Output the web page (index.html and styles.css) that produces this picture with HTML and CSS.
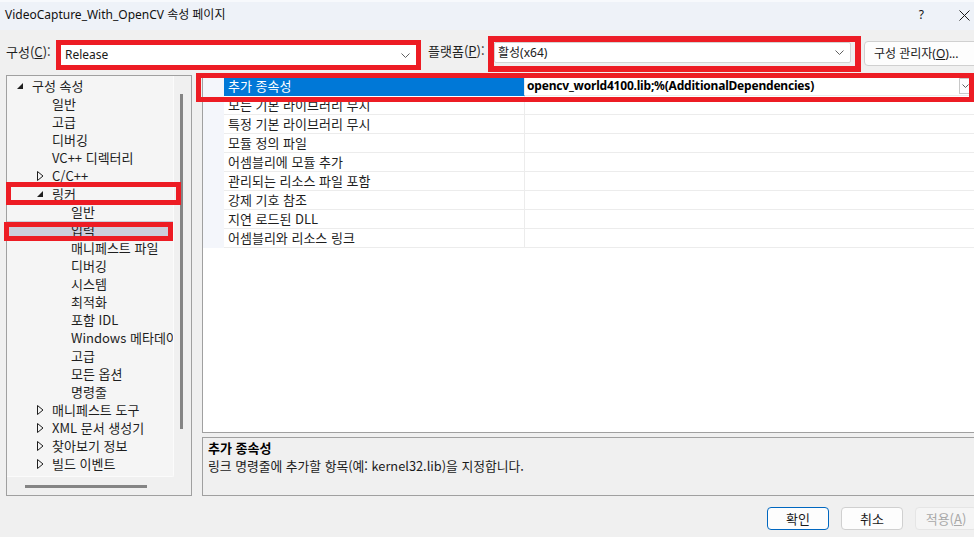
FILE: index.html
```html
<!DOCTYPE html>
<html lang="ko">
<head>
<meta charset="utf-8">
<title>VideoCapture_With_OpenCV 속성 페이지</title>
<link rel="stylesheet" href="styles.css">
</head>
<body>
<div class="dialog">
  <header class="titlebar">
    <span class="title">VideoCapture_With_OpenCV 속성 페이지</span>
    <span class="help">?</span>
    <svg class="close" width="11" height="11" viewBox="0 0 11 11"><path d="M0.5 0.5L10.5 10.5M10.5 0.5L0.5 10.5" stroke="#1a1a1a" stroke-width="1" fill="none"/></svg>
  </header>

  <div class="config-row">
    <span class="cfg-label ko">구성(<u>C</u>):</span>
    <div class="hl hl-config">
      <div class="combo">
        <span class="combo-text">Release</span>
        <svg class="chev" width="9" height="5" viewBox="0 0 9 5"><polyline points="0.5,0.5 4.5,4.5 8.5,0.5" fill="none" stroke="#606060" stroke-width="1"/></svg>
      </div>
    </div>
    <span class="plat-label ko">플랫폼(<u>P</u>):</span>
    <div class="hl hl-platform">
      <div class="combo combo-bordered">
        <span class="combo-text">활성(x64)</span>
        <svg class="chev" width="9" height="5" viewBox="0 0 9 5"><polyline points="0.5,0.5 4.5,4.5 8.5,0.5" fill="none" stroke="#606060" stroke-width="1"/></svg>
      </div>
    </div>
    <button class="btn btn-manager ko">구성 관리자(<u>O</u>)...</button>
  </div>

  <div class="main">
    <div class="tree-panel">
      <div class="tree ko">
        <div class="node l0"><span class="exp"><svg width="6" height="6" viewBox="0 0 6 6"><polygon points="6,0 6,6 0,6" fill="#1e1e1e"/></svg></span>구성 속성</div>
        <div class="node l1"><span class="exp"></span>일반</div>
        <div class="node l1"><span class="exp"></span>고급</div>
        <div class="node l1"><span class="exp"></span>디버깅</div>
        <div class="node l1"><span class="exp"></span>VC++ 디렉터리</div>
        <div class="node l1"><span class="exp"><svg width="7" height="10" viewBox="0 0 7 10"><polygon points="0.5,0.5 6,5 0.5,9.5" fill="none" stroke="#1e1e1e" stroke-width="1"/></svg></span>C/C++</div>
        <div class="node l1"><span class="exp"><svg width="6" height="6" viewBox="0 0 6 6"><polygon points="6,0 6,6 0,6" fill="#1e1e1e"/></svg></span>링커</div>
        <div class="node l2">일반</div>
        <div class="node l2 selected">입력</div>
        <div class="node l2">매니페스트 파일</div>
        <div class="node l2">디버깅</div>
        <div class="node l2">시스템</div>
        <div class="node l2">최적화</div>
        <div class="node l2">포함 IDL</div>
        <div class="node l2">Windows 메타데이터</div>
        <div class="node l2">고급</div>
        <div class="node l2">모든 옵션</div>
        <div class="node l2">명령줄</div>
        <div class="node l1"><span class="exp"><svg width="7" height="10" viewBox="0 0 7 10"><polygon points="0.5,0.5 6,5 0.5,9.5" fill="none" stroke="#1e1e1e" stroke-width="1"/></svg></span>매니페스트 도구</div>
        <div class="node l1"><span class="exp"><svg width="7" height="10" viewBox="0 0 7 10"><polygon points="0.5,0.5 6,5 0.5,9.5" fill="none" stroke="#1e1e1e" stroke-width="1"/></svg></span>XML 문서 생성기</div>
        <div class="node l1"><span class="exp"><svg width="7" height="10" viewBox="0 0 7 10"><polygon points="0.5,0.5 6,5 0.5,9.5" fill="none" stroke="#1e1e1e" stroke-width="1"/></svg></span>찾아보기 정보</div>
        <div class="node l1"><span class="exp"><svg width="7" height="10" viewBox="0 0 7 10"><polygon points="0.5,0.5 6,5 0.5,9.5" fill="none" stroke="#1e1e1e" stroke-width="1"/></svg></span>빌드 이벤트</div>
      </div>
      <div class="vscroll"><div class="vthumb"></div></div>
      <div class="hscroll"><div class="hthumb"></div></div>
      <div class="corner"></div>
    </div>

    <div class="right">
      <div class="grid">
        <div class="row active">
          <div class="gutter"></div>
          <div class="name ko">추가 종속성</div>
          <div class="value">
            <span class="value-text">opencv_world4100.lib;%(AdditionalDependencies)</span>
            <span class="drop"><svg width="7" height="4" viewBox="0 0 7 4"><polyline points="0.5,0.5 3.5,3.5 6.5,0.5" fill="none" stroke="#606060" stroke-width="1"/></svg></span>
          </div>
        </div>
        <div class="row"><div class="gutter"></div><div class="name ko">모든 기본 라이브러리 무시</div><div class="value"></div></div>
        <div class="row"><div class="gutter"></div><div class="name ko">특정 기본 라이브러리 무시</div><div class="value"></div></div>
        <div class="row"><div class="gutter"></div><div class="name ko">모듈 정의 파일</div><div class="value"></div></div>
        <div class="row"><div class="gutter"></div><div class="name ko">어셈블리에 모듈 추가</div><div class="value"></div></div>
        <div class="row"><div class="gutter"></div><div class="name ko">관리되는 리소스 파일 포함</div><div class="value"></div></div>
        <div class="row"><div class="gutter"></div><div class="name ko">강제 기호 참조</div><div class="value"></div></div>
        <div class="row"><div class="gutter"></div><div class="name ko">지연 로드된 DLL</div><div class="value"></div></div>
        <div class="row"><div class="gutter"></div><div class="name ko">어셈블리와 리소스 링크</div><div class="value"></div></div>
      </div>
      <div class="desc ko">
        <div class="desc-title">추가 종속성</div>
        <div class="desc-text">링크 명령줄에 추가할 항목(예: kernel32.lib)을 지정합니다.</div>
      </div>
    </div>
  </div>

  <footer class="buttons ko">
    <button class="btn btn-ok">확인</button>
    <button class="btn">취소</button>
    <button class="btn btn-disabled">적용(<u>A</u>)</button>
  </footer>

  <div class="mark mark-linker"></div>
  <div class="mark mark-input"></div>
  <div class="mark mark-row"></div>
</div>
</body>
</html>
```

FILE: styles.css
```css
html, body {
  margin: 0;
  padding: 0;
}
body {
  width: 974px;
  height: 537px;
  overflow: hidden;
  background: #f0f0f0;
  font-family: "Noto Sans", "Noto Sans CJK KR", sans-serif;
  font-size: 12px;
  color: #1e1e1e;
}
.ko {
  font-family: "Noto Sans CJK KR", "Noto Sans", sans-serif;
  font-size: 13px;
}
.dialog {
  position: relative;
  width: 974px;
  height: 537px;
}
u { text-decoration: underline; text-underline-offset: 1px; }

/* title bar */
.titlebar {
  height: 30px;
  display: flex;
  align-items: center;
  background: #eef2f8;
  border-top: 2px solid #f7f9fc;
  box-sizing: border-box;
  padding-left: 5px;
}
.title {
  font-size: 12px;
  line-height: 16px;
  color: #111;
  margin-top: -2px;
}
.help {
  margin-left: auto;
  font-size: 12px;
  line-height: 16px;
  color: #111;
  margin-top: -2px;
}
.close {
  margin-left: 35px;
  margin-right: 4px;
  margin-top: -2px;
}

/* config row */
.config-row {
  height: 45px;
  display: flex;
  align-items: flex-start;
  padding-left: 6px;
  box-sizing: border-box;
}
.cfg-label {
  flex: none;
  width: 50px;
  line-height: 16px;
  margin-top: 14px;
}
.plat-label {
  flex: none;
  width: 60px;
  margin-left: 7px;
  line-height: 16px;
  margin-top: 13px;
}
.hl {
  flex: none;
  border: 5px solid #ed1c24;
  box-sizing: border-box;
  display: flex;
}
.hl-config {
  width: 365px;
  height: 30px;
  margin-top: 10px;
}
.hl-platform {
  width: 373px;
  height: 36px;
  border-width: 6px;
  padding: 0 4px 3px 0;
  margin-top: 6px;
}
.combo {
  flex: 1;
  display: flex;
  align-items: center;
  background: #fff;
  padding: 0 6px 0 4px;
  box-sizing: border-box;
}
.combo-bordered {
  border: 1px solid #d4d4d4;
  border-radius: 2px;
  padding-left: 3px;
}
.combo-text {
  flex: 1;
  line-height: 16px;
  color: #1a1a1a;
}
.chev { display: block; }

.btn {
  font-family: inherit;
  font-size: inherit;
  line-height: 16px;
  color: #1a1a1a;
  background: #fdfdfd;
  border: 1px solid #d0d0d0;
  border-radius: 4px;
  padding: 0;
  box-sizing: border-box;
}
.btn-manager {
  flex: none;
  margin-left: 3px;
  width: 118px;
  height: 25px;
  text-align: left;
  padding-left: 9px;
  margin-top: 11px;
}

/* main */
.main {
  display: flex;
  height: 421px;
  padding-left: 6px;
}
.tree-panel {
  flex: none;
  width: 186px;
  border: 1px solid #a0a0a0;
  box-sizing: border-box;
  display: grid;
  grid-template-columns: 167px 1fr;
  grid-template-rows: 401px 1fr;
  background: #f0f0f0;
}
.tree {
  background: #f5f5f5;
  overflow: hidden;
  border-right: 1px solid #fbfbfb;
  border-bottom: 1px solid #fbfbfb;
  border-bottom-right-radius: 2px;
  padding-top: 1px;
  box-sizing: border-box;
}
.node {
  height: 18px;
  line-height: 18px;
  white-space: nowrap;
  display: flex;
  align-items: center;
  color: #1e1e1e;
}
.node .exp {
  width: 15px;
  flex: none;
  display: flex;
  align-items: center;
}
.node .exp svg { display: block; }
.l0 { padding-left: 10px; }
.l1 { padding-left: 30px; }
.l2 { padding-left: 64px; }
.node.selected { background: #cccedb; }

.vthumb {
  margin: 18px 0 0 6px;
  width: 3px;
  height: 335px;
  background: #858585;
}
.hthumb {
  margin: 8px 0 0 18px;
  width: 122px;
  height: 3px;
  background: #858585;
}

.right {
  margin-left: 10px;
  flex: 1;
  display: flex;
  flex-direction: column;
  gap: 4px;
}
.grid {
  height: 358px;
  background: #fff;
  border: 1px solid #a0a0a0;
  border-right: none;
  box-sizing: border-box;
  padding-top: 1px;
}
.row {
  display: grid;
  grid-template-columns: 21px 301px 1fr;
  height: 19px;
}
.gutter {
  background: #f4f6fb;
}
.name {
  padding-left: 4px;
  line-height: 18px;
  border-bottom: 1px solid #ececec;
  border-right: 1px solid #ececec;
  white-space: nowrap;
  color: #1e1e1e;
}
.value {
  border-bottom: 1px solid #ececec;
  display: flex;
  align-items: center;
}
.row.active .name {
  background: #0078d7;
  color: #fff;
  border-bottom-color: #0078d7;
}
.value-text {
  flex: 1;
  padding-left: 2px;
  font-weight: bold;
  line-height: 18px;
  letter-spacing: -0.2px;
  color: #000;
  white-space: nowrap;
}
.drop {
  width: 12px;
  height: 16px;
  margin-right: 3px;
  border: 1px solid #c8c8c8;
  background: #fdfdfd;
  display: flex;
  align-items: center;
  justify-content: center;
  box-sizing: border-box;
}
.drop svg { display: block; }

.desc {
  height: 59px;
  border: 1px solid #a0a0a0;
  border-right: none;
  box-sizing: border-box;
  background: #f0f0f0;
  padding: 1px 5px 0;
}
.desc-title {
  font-weight: bold;
  line-height: 18px;
  color: #000;
}
.desc-text {
  font-size: 12.8px;
  line-height: 18px;
  color: #1a1a1a;
}

/* footer */
.buttons {
  display: flex;
  justify-content: flex-end;
  gap: 12px;
  padding-top: 11px;
  margin-right: -3px;
}
.buttons .btn {
  width: 62px;
  height: 23px;
  text-align: center;
}
.buttons .btn-ok {
  border-color: #0067c0;
}
.buttons .btn-disabled {
  color: #a8a8a8;
  background: #f5f5f5;
  border-color: #e5e5e5;
}

/* red annotation boxes */
.mark {
  position: absolute;
  border: 5px solid #ed1c24;
  box-sizing: border-box;
  pointer-events: none;
}
.mark-linker { left: 6px; top: 182px; width: 175px; height: 23px; }
.mark-input { left: 4px; top: 222px; width: 169px; height: 19px; }
.mark-row { left: 196px; top: 73px; width: 778px; height: 29px; }
```
